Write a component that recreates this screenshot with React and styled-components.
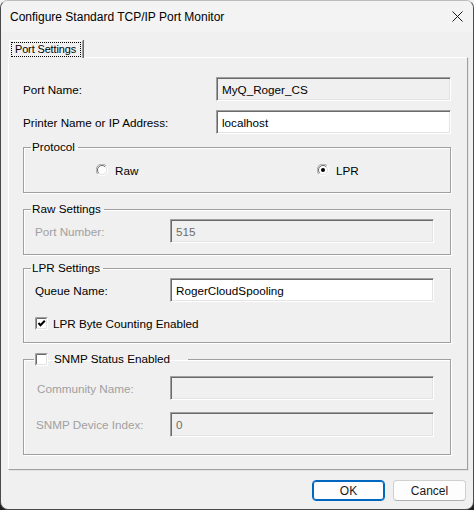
import React from "react";
import styled, { createGlobalStyle } from "styled-components";

const Global = createGlobalStyle`
  html, body { margin: 0; padding: 0; }
  body {
    width: 474px; height: 510px; overflow: hidden;
    background: linear-gradient(#f4f4f4 0 50%, #1e1e1e 50% 100%);
    font-family: "Liberation Sans", Arial, sans-serif;
    font-size: 11.7px;
    color: #000;
  }
  * { box-sizing: border-box; }
`;

const Window = styled.div`
  width: 474px; height: 510px;
  border: 1px solid #4a4a4a;
  border-top-color: #bcbcbc;
  border-radius: 8px;
  background: #f0f0f0;
  display: flex; flex-direction: column;
  overflow: hidden;
`;

const TitleBar = styled.div`
  height: 31px; flex: none;
  display: flex; align-items: center; justify-content: space-between;
  padding: 0 10px 0 9px;
  background: #f3f3f3;
`;

const TitleText = styled.span`
  font-family: "Liberation Sans", Arial, sans-serif;
  font-size: 12px;
  color: #000;
`;

const Body = styled.div`
  flex: 1;
  display: flex; flex-direction: column;
  padding: 8px 5px 0 7px;
`;

const TabStrip = styled.div`
  display: flex; padding-left: 1px;
`;

const Tab = styled.div`
  position: relative; z-index: 1;
  height: 18px; width: 74px;
  margin-bottom: -1px;
  background: #f0f0f0;
  border-top: 1px solid #fff;
  border-left: 1px solid #fff;
  border-right: 1px solid #a0a0a0;
  box-shadow: 1px 0 0 #696969;
  padding: 1px 1px 0 1px;
`;

const FocusLabel = styled.span`
  display: block;
  height: 15px; line-height: 13px;
  padding-left: 3px;
  border: 1px dotted #000;
  font-size: 10.9px;
  letter-spacing: -0.1px;
  white-space: nowrap;
`;

const Panel = styled.div`
  height: 413px; flex: none;
  border-top: 1px solid #fff;
  border-left: 1px solid #fff;
  border-right: 1px solid #a0a0a0;
  border-bottom: 1px solid #a0a0a0;
  box-shadow: 1px 1px 0 #e3e3e3;
  padding: 19px 16px 0 14px;
  display: flex; flex-direction: column;
`;

const FieldRow = styled.div`
  display: grid;
  grid-template-columns: ${p => p.$label}px 1fr;
  align-items: center;
  margin-top: ${p => p.$top || 0}px;
`;

const Label = styled.span`
  color: ${p => (p.$disabled ? "#a0a0a0" : "#000")};
  padding-left: ${p => p.$indent || 0}px;
  white-space: nowrap;
`;

const Field = styled.div`
  height: ${p => p.$h || 24}px;
  display: flex; align-items: center;
  padding-left: 5px;
  background: ${p => (p.$disabled ? "#f0f0f0" : "#fff")};
  color: ${p => (p.$muted ? "#6d6d6d" : "#000")};
  border: 1px solid;
  border-color: #a0a0a0 #fff #fff #a0a0a0;
  box-shadow: inset 1px 1px 0 #696969, inset -1px -1px 0 #e3e3e3;
`;

const Group = styled.fieldset`
  margin: ${p => p.$top || 0}px 0 0 0;
  min-width: 0;
  border: 1px solid #a0a0a0;
  box-shadow: 1px 1px 0 #fff, inset 1px 1px 0 #fff;
  padding: 0 16px ${p => p.$bottom || 0}px 11px;
`;

const Legend = styled.legend`
  line-height: 14px;
  height: 14px;
  margin-left: ${p => p.$ml ?? -4}px;
  padding: 0 ${p => p.$pr ?? 3}px 0 1px;
  display: flex; align-items: center; gap: 6px;
  white-space: nowrap;
`;

const RadioRow = styled.div`
  display: grid;
  grid-template-columns: 221px 1fr;
  padding-left: 61px;
  margin-top: 9px;
  height: 14px;
  align-items: center;
`;

const Option = styled.label`
  display: flex; align-items: center; gap: 7px;
`;

const CheckRow = styled.label`
  display: flex; align-items: center; gap: 5px;
  margin-top: ${p => p.$top || 0}px;
  height: 14px;
`;

const Footer = styled.div`
  display: flex; justify-content: flex-end; gap: 8px;
  padding: 10px 2px 0 0;
`;

const Button = styled.button`
  width: 73px; height: 21px;
  font-family: "Liberation Sans", Arial, sans-serif;
  font-size: 12px; color: #1a1a1a;
  background: #fdfdfd;
  border-radius: 4px;
  border: 1px solid ${p => (p.$primary ? "#0067c0" : "#d0d0d0")};
  border-bottom-color: ${p => (p.$primary ? "#0067c0" : "#b0b0b0")};
  box-shadow: ${p => (p.$primary ? "inset 0 0 0 1px #0067c0" : "none")};
  padding: 0;
`;

const Radio = ({ checked }) => (
  <svg width="12" height="12" viewBox="0 0 12 12">
    <path d="M10.2 1.8 A5.5 5.5 0 0 0 1.8 10.2" fill="none" stroke="#a0a0a0" />
    <path d="M1.8 10.2 A5.5 5.5 0 0 0 10.2 1.8" fill="none" stroke="#fff" />
    <circle cx="6" cy="6" r="4.5" fill="#fff" />
    <path d="M9.2 2.8 A4.5 4.5 0 0 0 2.8 9.2" fill="none" stroke="#696969" />
    <path d="M2.8 9.2 A4.5 4.5 0 0 0 9.2 2.8" fill="none" stroke="#e3e3e3" />
    {checked && <circle cx="6" cy="6" r="2" fill="#000" />}
  </svg>
);

const Checkbox = ({ checked }) => (
  <svg width="13" height="13" viewBox="0 0 13 13">
    <rect x="0" y="0" width="13" height="13" fill="#fff" />
    <path d="M0.5 12.5 V0.5 H12.5" fill="none" stroke="#a0a0a0" />
    <path d="M1.5 11.5 V1.5 H11.5" fill="none" stroke="#696969" />
    <path d="M1.5 11.5 H11.5 V1.5" fill="none" stroke="#e3e3e3" />
    {checked && (
      <polyline points="3.5,6 5.5,8.3 9.8,3.7" fill="none" stroke="#000" strokeWidth="2" />
    )}
  </svg>
);

const CloseIcon = () => (
  <svg width="11" height="11" viewBox="0 0 11 11">
    <path d="M0.5 0.5 L10.5 10.5 M10.5 0.5 L0.5 10.5" stroke="#1b1b1b" strokeWidth="1" />
  </svg>
);

export default function App() {
  return (
    <>
      <Global />
      <Window>
        <TitleBar>
          <TitleText>Configure Standard TCP/IP Port Monitor</TitleText>
          <CloseIcon />
        </TitleBar>
        <Body>
          <TabStrip>
            <Tab>
              <FocusLabel>Port Settings</FocusLabel>
            </Tab>
          </TabStrip>
          <Panel>
            <FieldRow $label={193}>
              <Label>Port Name:</Label>
              <Field $disabled>MyQ_Roger_CS</Field>
            </FieldRow>
            <FieldRow $label={193} $top={9}>
              <Label>Printer Name or IP Address:</Label>
              <Field>localhost</Field>
            </FieldRow>

            <Group $top={6} $bottom={15}>
              <Legend>Protocol</Legend>
              <RadioRow>
                <Option><Radio /> Raw</Option>
                <Option><Radio checked /> LPR</Option>
              </RadioRow>
            </Group>

            <Group $top={9} $bottom={11}>
              <Legend>Raw Settings</Legend>
              <FieldRow $label={135} $top={3}>
                <Label $disabled>Port Number:</Label>
                <Field $disabled $muted>515</Field>
              </FieldRow>
            </Group>

            <Group $top={6} $bottom={12}>
              <Legend>LPR Settings</Legend>
              <FieldRow $label={135} $top={3}>
                <Label>Queue Name:</Label>
                <Field>RogerCloudSpooling</Field>
              </FieldRow>
              <CheckRow $top={14}>
                <Checkbox checked />
                LPR Byte Counting Enabled
              </CheckRow>
            </Group>

            <Group $top={9} $bottom={17}>
              <Legend $ml={-1} $pr={18}>
                <Checkbox />
                SNMP Status Enabled
              </Legend>
              <FieldRow $label={135} $top={10}>
                <Label $disabled $indent={2}>Community Name:</Label>
                <Field $disabled />
              </FieldRow>
              <FieldRow $label={135} $top={12}>
                <Label $disabled $indent={1}>SNMP Device Index:</Label>
                <Field $disabled $muted $h={25}>0</Field>
              </FieldRow>
            </Group>
          </Panel>
          <Footer>
            <Button $primary>OK</Button>
            <Button>Cancel</Button>
          </Footer>
        </Body>
      </Window>
    </>
  );
}
